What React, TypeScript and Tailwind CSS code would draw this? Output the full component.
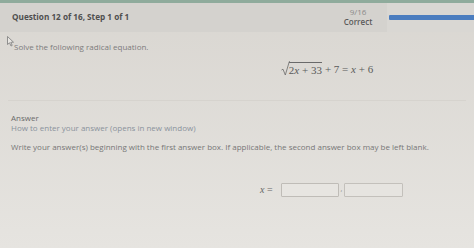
import React from "react";

const font = { fontFamily: '"Open Sans", "Noto Sans", sans-serif' };

const Cursor = () => (
  <svg width="8" height="11" viewBox="0 0 8 11" className="absolute left-[7px] top-[36px]">
    <path d="M0.5 0.5 L0.5 8.5 L2.5 6.8 L4 10 L5.2 9.4 L3.8 6.3 L6.5 6.2 Z" fill="#e8e6e2" stroke="#7a7a7a" strokeWidth="0.8" />
  </svg>
);

const Equation = () => (
  <div className="flex items-center text-[11px] text-[#5a5a5a]" style={{ fontFamily: '"Liberation Serif", serif' }}>
    <svg width="9" height="15" viewBox="0 0 9 15" className="mr-[-1px]">
      <path d="M0.5 9 L2 8.2 L4.3 14 L8.3 0.6 L9 0.6" fill="none" stroke="#6a6a6a" strokeWidth="0.8" />
    </svg>
    <span className="border-t border-[#6a6a6a] pt-[1px] leading-[12px]">
      2<i>x</i> + 33
    </span>
    <span className="ml-[3px] leading-[12px] pt-[1px]">
      + 7 = <i>x</i> + 6
    </span>
  </div>
);

const App = () => {
  return (
    <div className="relative w-[474px] h-[248px] overflow-hidden bg-gradient-to-b from-[#d9d6d1] to-[#e6e4e0]" style={font}>
      <div className="h-[3px] bg-[#8fab9c]" />
      <div className="flex h-[29px] items-center bg-[#d4d2ce]">
        <div className="pl-[12px] text-[8.2px] font-bold text-[#4f4f4f] flex-1">
          Question 12 of 16, Step 1 of 1
        </div>
        <div className="w-[58px] flex flex-col items-center text-[8px] leading-[10px] pb-[1px]">
          <span className="text-[#8a8a8a]">9/16</span>
          <span className="font-semibold text-[#5a5a5a]">Correct</span>
        </div>
        <div className="w-[87px] h-full flex items-center pl-[2px] bg-[#d9d7d3]">
          <div className="h-[5px] w-full bg-[#4b7dbf] rounded-l-[1px]" />
        </div>
      </div>
      <Cursor />
      <div className="pl-[14px] pt-[9px] text-[8px] leading-[11px] text-[#7c7c7c]">
        Solve the following radical equation.
      </div>
      <div className="flex justify-center pl-[190px] pr-[10px] pt-[9px]">
        <Equation />
      </div>
      <div className="mx-[8px] mt-[24px] border-t border-[#d6d3ce]" />
      <div className="pl-[11px] pt-[12px] text-[8px] leading-[10px]">
        <div className="text-[#6a6a6a]">Answer</div>
        <div className="text-[#8a929c]">How to enter your answer (opens in new window)</div>
        <div className="pt-[9px] text-[#777]">
          Write your answer(s) beginning with the first answer box. If applicable, the second answer box may be left blank.
        </div>
      </div>
      <div className="flex items-center pl-[260px] pt-[30px] text-[10px] text-[#666]">
        <span style={{ fontFamily: '"Liberation Serif", serif' }}>
          <i>x</i> =
        </span>
        <div className="ml-[8px] w-[58px] h-[14px] border border-[#bfbcb7] bg-[#e7e5e1] rounded-[1px]" />
        <span className="mx-[2px] text-[7px] text-[#888]">,</span>
        <div className="w-[59px] h-[14px] border border-[#c3c0bb] bg-[#e6e4e0] rounded-[1px]" />
      </div>
    </div>
  );
};

export default App;
